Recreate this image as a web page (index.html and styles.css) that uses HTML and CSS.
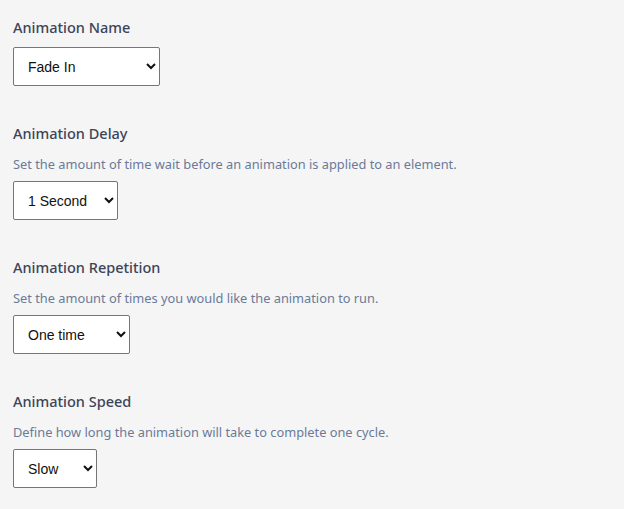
FILE: index.html
```html
<!DOCTYPE html>
<html>
<head>
<meta charset="utf-8">
<link rel="stylesheet" href="styles.css">
</head>
<body>
<div class="panel">
  <div class="field">
    <div class="label">Animation Name</div>
    <select class="sel sel-name"><option>Fade In</option></select>
  </div>
  <div class="field">
    <div class="label">Animation Delay</div>
    <div class="desc">Set the amount of time wait before an animation is applied to an element.</div>
    <select class="sel sel-delay"><option>1 Second</option></select>
  </div>
  <div class="field">
    <div class="label">Animation Repetition</div>
    <div class="desc">Set the amount of times you would like the animation to run.</div>
    <select class="sel sel-rep"><option>One time</option></select>
  </div>
  <div class="field">
    <div class="label">Animation Speed</div>
    <div class="desc">Define how long the animation will take to complete one cycle.</div>
    <select class="sel sel-speed"><option>Slow</option></select>
  </div>
</div>
</body>
</html>
```

FILE: styles.css
```css
html, body {
  margin: 0;
  padding: 0;
  background: #f5f5f5;
}
.panel {
  padding: 17px 13px 0 13px;
  display: flex;
  flex-direction: column;
  gap: 37px;
  font-family: "Noto Sans", sans-serif;
}
.field {
  display: flex;
  flex-direction: column;
  align-items: flex-start;
}
.label {
  font-size: 14.5px;
  line-height: 20px;
  color: #3d4458;
  font-weight: 500;
  margin-bottom: 10px;
}
.desc {
  font-size: 12.8px;
  line-height: 18px;
  color: #6b7a99;
  margin-top: 2px;
  margin-bottom: 8px;
}
.sel {
  height: 39px;
  box-sizing: border-box;
  font-family: "Liberation Sans", Arial, sans-serif;
  font-size: 14px;
  color: #111;
  background: #fff;
  border: 1px solid #767676;
  border-radius: 2px;
  padding: 0 6px 0 10px;
}
.sel-name { width: 147px; }
.sel-delay { width: 105px; }
.sel-rep { width: 117px; }
.sel-speed { width: 84px; }
```
